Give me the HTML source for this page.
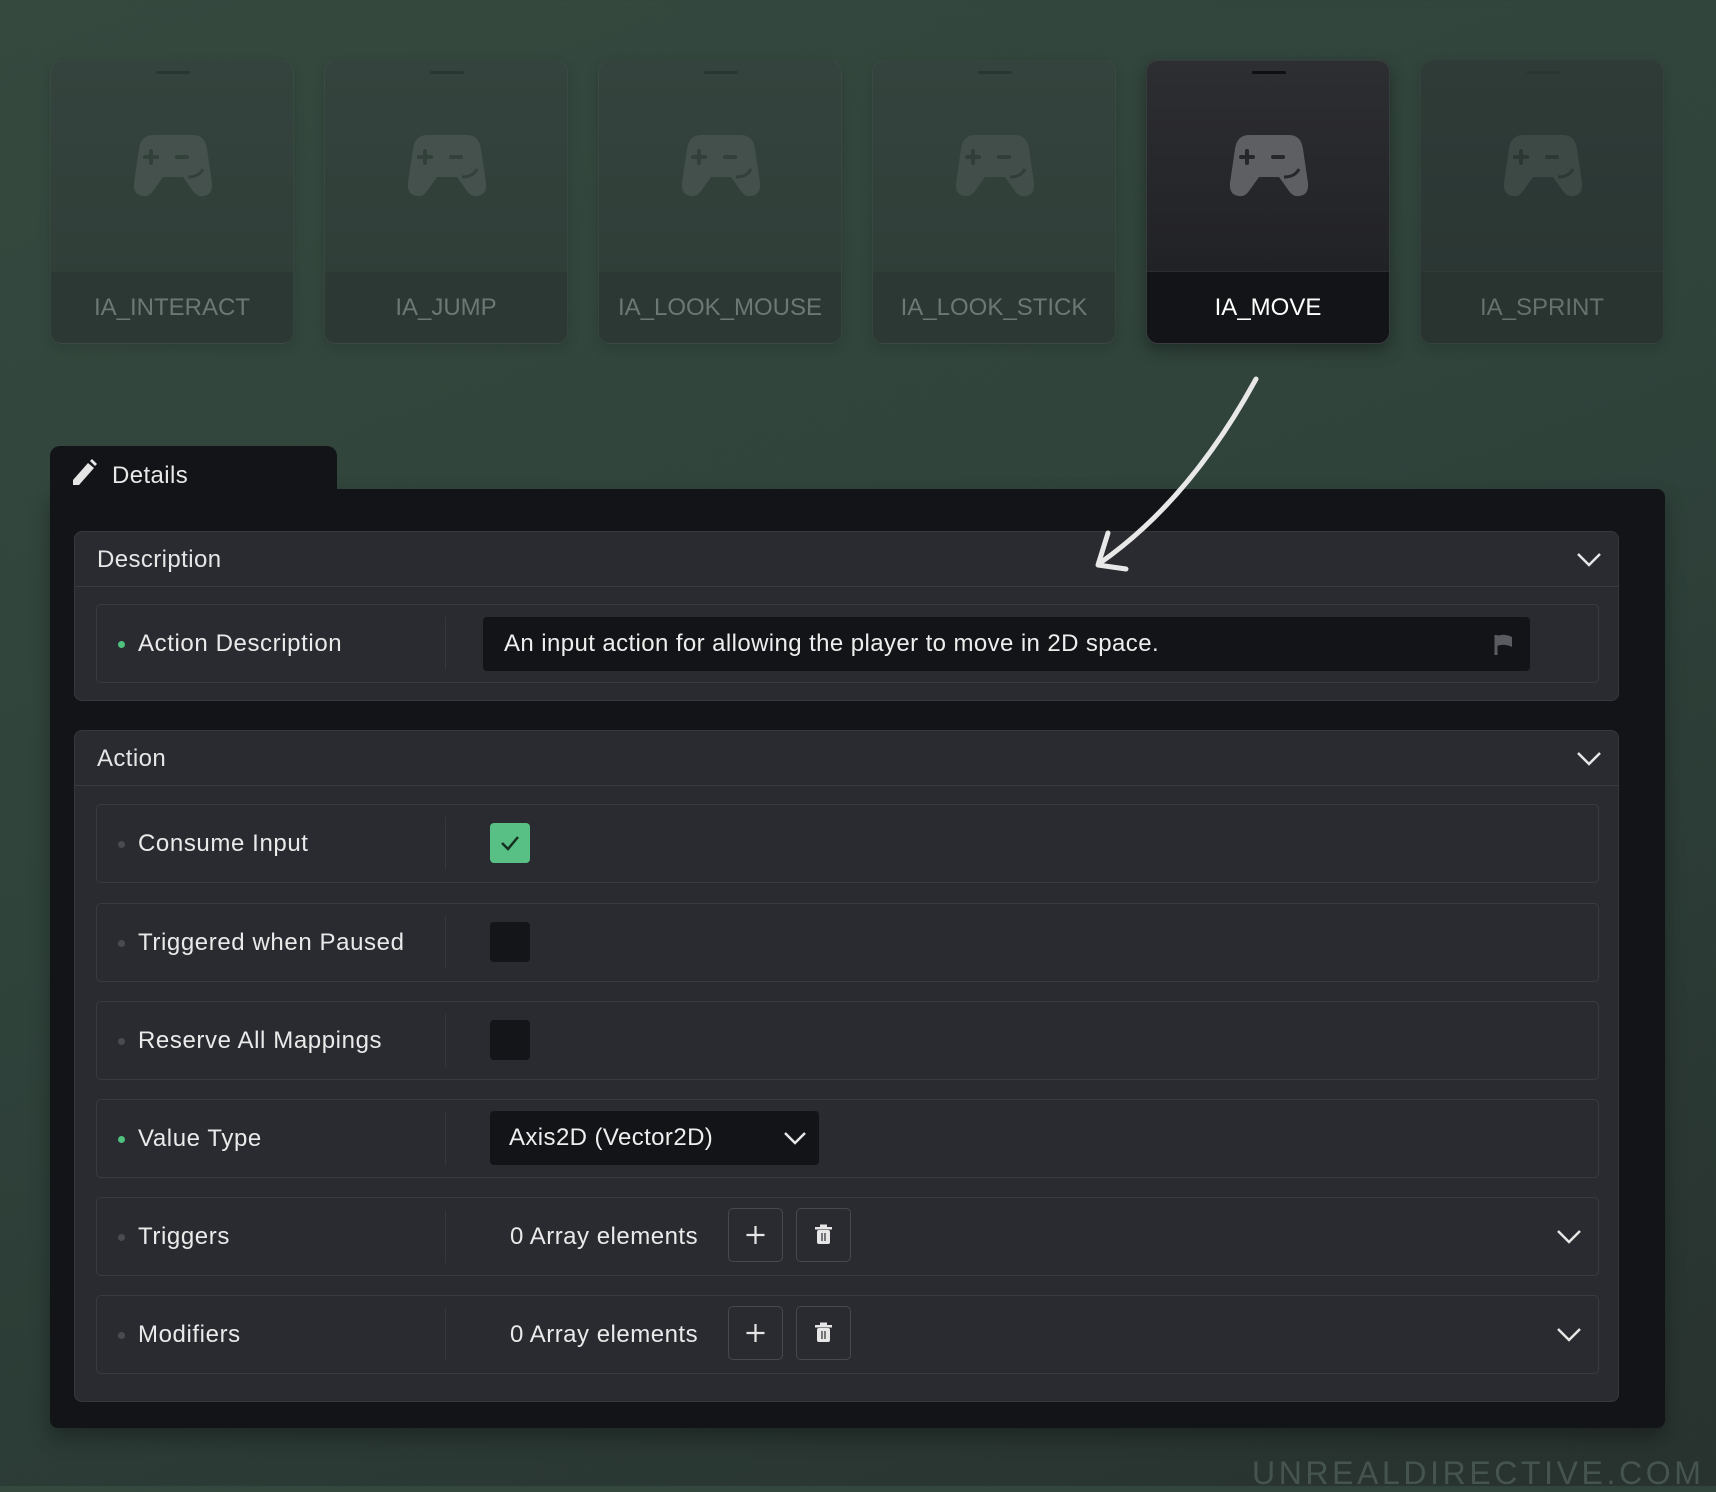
<!DOCTYPE html>
<html><head><meta charset="utf-8"><style>
*{margin:0;padding:0;box-sizing:border-box}
body{width:1716px;height:1486px;overflow:hidden;position:relative;font-family:"Liberation Sans",sans-serif;background:linear-gradient(160deg,#35493f 0%,#2f433b 45%,#28322f 100%)}
.card{position:absolute;top:60px;width:244px;height:284px;border-radius:12px;background:linear-gradient(180deg,#34433d,#2f3d37);border:1px solid rgba(255,255,255,0.04);box-shadow:0 4px 12px rgba(0,0,0,0.12);overflow:hidden}
.card .h{position:absolute;top:10px;left:105px;width:34px;height:3px;border-radius:2px;background:#2a3632}
.card .lab{position:absolute;left:0;right:0;top:210px;bottom:0;background:#2c3833;border-top:1px solid rgba(255,255,255,0.03);color:#6c7874;font-size:24px;text-align:center;line-height:72px}
.card svg{position:absolute;left:82px;top:74px}
.card.act{background:linear-gradient(180deg,#2d2e32,#1d1e21);border-color:#3a3b3f;box-shadow:0 6px 16px rgba(0,0,0,0.35)}
.card.act .lab{background:#131417;color:#fff;border-top:1px solid #2c2d31}
.card.act .h{background:#0e0f11}
.tab{position:absolute;left:50px;top:446px;width:287px;height:50px;background:#131417;border-radius:10px 10px 0 0;color:#e8e8e8;font-size:24px}
.panel{position:absolute;left:50px;top:489px;width:1615px;height:939px;background:#131417;border-radius:0 8px 8px 8px;box-shadow:0 10px 20px rgba(0,0,0,0.3)}
.sec{position:absolute;left:74px;width:1545px;background:#2a2b30;border:1px solid #37383d;border-radius:8px}
.sh{height:55px;border-bottom:1px solid #3a3b40;color:#e6e6e6;font-size:24px;line-height:55px;padding-left:22px;position:relative;letter-spacing:0.4px}
.row{position:absolute;left:96px;width:1503px;height:79px;background:#2a2b30;border:1px solid #3a3b40;border-radius:5px}
.row .dot{position:absolute;left:21px;top:36px;width:7px;height:7px;border-radius:50%;background:#4a4b50}
.row .dot.g{background:#4fc07d}
.row .l{position:absolute;left:41px;top:0;line-height:77px;color:#eaeaea;font-size:24px;letter-spacing:0.6px}
.row .div{position:absolute;left:348px;top:12px;width:1px;height:53px;background:#36373c}
.cb{position:absolute;left:393px;top:18px;width:40px;height:40px;border-radius:4px;background:#141518}
.chev{position:absolute}
.btn{position:absolute;top:10px;width:55px;height:54px;border:1px solid #47484d;border-radius:5px;background:#2a2b30}
.at{position:absolute;left:413px;line-height:77px;color:#eaeaea;font-size:24px;letter-spacing:0.5px}
</style></head><body>

<div class="card" style="left:50px"><div class="h"></div><svg width="80" height="62" viewBox="0 0 80 62"><path fill="#44514c" d="M20,0H60Q72,0 74,14L79,48Q80,60 70,61Q64,62 60,56L50,42H30L20,56Q16,62 10,61Q0,60 1,48L6,14Q8,0 20,0Z"/><path d="M18,16v12M12,22h12M44,22h10" stroke="#33413b" stroke-width="4" stroke-linecap="round"/><path d="M55,42 Q66,42 70,34" stroke="#33413b" stroke-width="3" fill="none"/></svg><div class="lab">IA_INTERACT</div></div>
<div class="card" style="left:324px"><div class="h"></div><svg width="80" height="62" viewBox="0 0 80 62"><path fill="#44514c" d="M20,0H60Q72,0 74,14L79,48Q80,60 70,61Q64,62 60,56L50,42H30L20,56Q16,62 10,61Q0,60 1,48L6,14Q8,0 20,0Z"/><path d="M18,16v12M12,22h12M44,22h10" stroke="#33413b" stroke-width="4" stroke-linecap="round"/><path d="M55,42 Q66,42 70,34" stroke="#33413b" stroke-width="3" fill="none"/></svg><div class="lab">IA_JUMP</div></div>
<div class="card" style="left:598px"><div class="h"></div><svg width="80" height="62" viewBox="0 0 80 62"><path fill="#43504b" d="M20,0H60Q72,0 74,14L79,48Q80,60 70,61Q64,62 60,56L50,42H30L20,56Q16,62 10,61Q0,60 1,48L6,14Q8,0 20,0Z"/><path d="M18,16v12M12,22h12M44,22h10" stroke="#323f3a" stroke-width="4" stroke-linecap="round"/><path d="M55,42 Q66,42 70,34" stroke="#323f3a" stroke-width="3" fill="none"/></svg><div class="lab">IA_LOOK_MOUSE</div></div>
<div class="card" style="left:872px"><div class="h"></div><svg width="80" height="62" viewBox="0 0 80 62"><path fill="#424e4a" d="M20,0H60Q72,0 74,14L79,48Q80,60 70,61Q64,62 60,56L50,42H30L20,56Q16,62 10,61Q0,60 1,48L6,14Q8,0 20,0Z"/><path d="M18,16v12M12,22h12M44,22h10" stroke="#313d39" stroke-width="4" stroke-linecap="round"/><path d="M55,42 Q66,42 70,34" stroke="#313d39" stroke-width="3" fill="none"/></svg><div class="lab">IA_LOOK_STICK</div></div>
<div class="card act" style="left:1146px"><div class="h"></div><svg width="80" height="62" viewBox="0 0 80 62"><path fill="#5e5f63" d="M20,0H60Q72,0 74,14L79,48Q80,60 70,61Q64,62 60,56L50,42H30L20,56Q16,62 10,61Q0,60 1,48L6,14Q8,0 20,0Z"/><path d="M18,16v12M12,22h12M44,22h10" stroke="#26272a" stroke-width="4" stroke-linecap="round"/><path d="M55,42 Q66,42 70,34" stroke="#26272a" stroke-width="3" fill="none"/></svg><div class="lab">IA_MOVE</div></div>
<div class="card" style="left:1420px;background:linear-gradient(180deg,#2e3b37,#2a3532)"><div class="h"></div><svg width="80" height="62" viewBox="0 0 80 62"><path fill="#3d4945" d="M20,0H60Q72,0 74,14L79,48Q80,60 70,61Q64,62 60,56L50,42H30L20,56Q16,62 10,61Q0,60 1,48L6,14Q8,0 20,0Z"/><path d="M18,16v12M12,22h12M44,22h10" stroke="#2d3834" stroke-width="4" stroke-linecap="round"/><path d="M55,42 Q66,42 70,34" stroke="#2d3834" stroke-width="3" fill="none"/></svg><div class="lab" style="background:#29332f;color:#66706d">IA_SPRINT</div></div>

<div class="panel"></div>
<div class="tab">
<svg style="position:absolute;left:20px;top:12px" width="28" height="28" viewBox="0 0 28 28"><path d="M3,22 L18,5 L24,10 L9,27 H3 Z" fill="#e6e6e6"/><path d="M20,3 L22,1 L27,6 L25,8 Z" fill="#e6e6e6"/></svg>
<span style="position:absolute;left:62px;top:16px;letter-spacing:0.4px">Details</span></div>

<div class="sec" style="top:531px;height:170px">
<div class="sh">Description<svg class="chev" style="right:16px;top:20px" width="26" height="16" viewBox="0 0 26 16"><path d="M2,2 L13,13 L24,2" stroke="#e6e6e6" stroke-width="2.5" fill="none"/></svg></div></div>
<div class="row" style="top:604px"><div class="dot g"></div><div class="l">Action Description</div><div class="div"></div>
<div style="position:absolute;left:386px;top:12px;width:1047px;height:54px;background:#131417;border-radius:4px;color:#eee;font-size:24px;line-height:54px;padding-left:21px;letter-spacing:0.4px">An input action for allowing the player to move in 2D space.
<svg style="position:absolute;right:16px;top:17px" width="20" height="22" viewBox="0 0 20 22"><path d="M2,1V21" stroke="#5a5b60" stroke-width="3"/><path d="M3,2 Q10,-1 18,3 V13 Q10,9 3,12Z" fill="#5a5b60"/></svg></div></div>

<div class="sec" style="top:730px;height:672px">
<div class="sh">Action<svg class="chev" style="right:16px;top:20px" width="26" height="16" viewBox="0 0 26 16"><path d="M2,2 L13,13 L24,2" stroke="#e6e6e6" stroke-width="2.5" fill="none"/></svg></div></div>

<div class="row" style="top:804px"><div class="dot"></div><div class="l">Consume Input</div><div class="div"></div>
<div class="cb" style="background:#58c084"><svg width="40" height="40" viewBox="0 0 40 40"><path d="M12,20 L18,26 L28,14" stroke="#16301f" stroke-width="2.5" fill="none"/></svg></div></div>
<div class="row" style="top:903px"><div class="dot"></div><div class="l">Triggered when Paused</div><div class="div"></div><div class="cb"></div></div>
<div class="row" style="top:1001px"><div class="dot"></div><div class="l">Reserve All Mappings</div><div class="div"></div><div class="cb"></div></div>
<div class="row" style="top:1099px"><div class="dot g"></div><div class="l">Value Type</div><div class="div"></div>
<div style="position:absolute;left:393px;top:11px;width:329px;height:54px;background:#131417;border-radius:4px;color:#eee;font-size:24px;line-height:54px;padding-left:19px;letter-spacing:0.4px">Axis2D (Vector2D)<svg style="position:absolute;right:12px;top:20px" width="24" height="15" viewBox="0 0 24 15"><path d="M2,2 L12,12 L22,2" stroke="#e6e6e6" stroke-width="2.5" fill="none"/></svg></div></div>

<div class="row" style="top:1197px"><div class="dot"></div><div class="l">Triggers</div><div class="div"></div>
<div class="at">0 Array elements</div>
<div class="btn" style="left:631px"><svg width="53" height="52" viewBox="0 0 53 52"><path d="M26.5,17V35M17.5,26H35.5" stroke="#e6e6e6" stroke-width="2.2"/></svg></div>
<div class="btn" style="left:699px"><svg width="53" height="52" viewBox="0 0 53 52"><rect x="20" y="21" width="13" height="14" rx="2" fill="#e6e6e6"/><rect x="18" y="18" width="17" height="2.5" fill="#e6e6e6"/><rect x="23" y="15.5" width="7" height="3" fill="#e6e6e6"/><path d="M25,24V32M28,24V32" stroke="#2a2b30" stroke-width="1.2"/></svg></div>
<svg class="chev" style="right:16px;top:31px" width="26" height="16" viewBox="0 0 26 16"><path d="M2,2 L13,13 L24,2" stroke="#e6e6e6" stroke-width="2.5" fill="none"/></svg></div>

<div class="row" style="top:1295px"><div class="dot"></div><div class="l">Modifiers</div><div class="div"></div>
<div class="at">0 Array elements</div>
<div class="btn" style="left:631px"><svg width="53" height="52" viewBox="0 0 53 52"><path d="M26.5,17V35M17.5,26H35.5" stroke="#e6e6e6" stroke-width="2.2"/></svg></div>
<div class="btn" style="left:699px"><svg width="53" height="52" viewBox="0 0 53 52"><rect x="20" y="21" width="13" height="14" rx="2" fill="#e6e6e6"/><rect x="18" y="18" width="17" height="2.5" fill="#e6e6e6"/><rect x="23" y="15.5" width="7" height="3" fill="#e6e6e6"/><path d="M25,24V32M28,24V32" stroke="#2a2b30" stroke-width="1.2"/></svg></div>
<svg class="chev" style="right:16px;top:31px" width="26" height="16" viewBox="0 0 26 16"><path d="M2,2 L13,13 L24,2" stroke="#e6e6e6" stroke-width="2.5" fill="none"/></svg></div>

<svg style="position:absolute;left:0;top:0" width="1716" height="1486" viewBox="0 0 1716 1486"><path d="M1256,379 Q1190,500 1100,563" stroke="#e8e8e8" stroke-width="5" stroke-linecap="round" fill="none"/><path d="M1108,533 L1098,565 L1126,569" stroke="#e8e8e8" stroke-width="5" stroke-linecap="round" stroke-linejoin="round" fill="none"/></svg>

<div style="position:absolute;left:1252px;top:1455px;font-size:32px;letter-spacing:3.6px;color:#46544f;white-space:nowrap">UNREALDIRECTIVE.COM</div>
</body></html>
